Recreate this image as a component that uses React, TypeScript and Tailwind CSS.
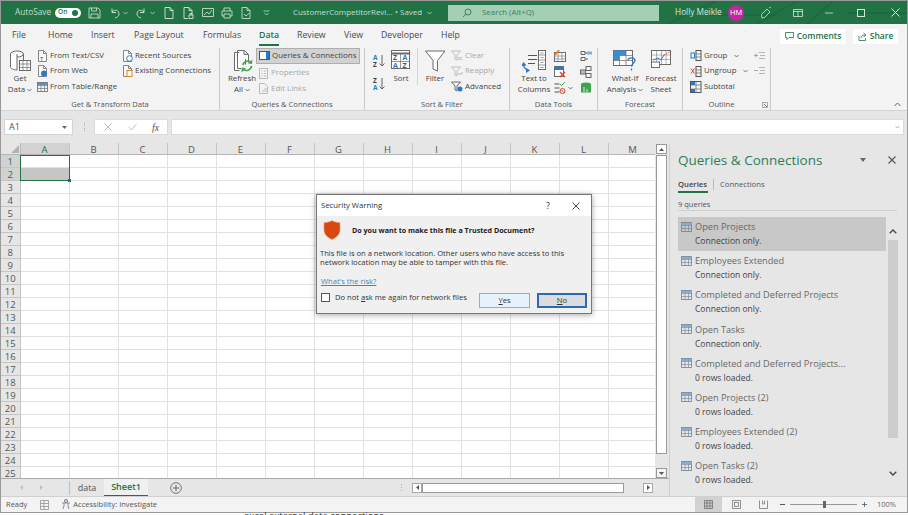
import React from "react";

const S = ({ w, h, className = "", children }: { w: number; h: number; className?: string; children: React.ReactNode }) => (
  <svg width={w} height={h} viewBox={`0 0 ${w} ${h}`} fill="none" className={`shrink-0 ${className}`}>{children}</svg>
);
const G = "#6b6b6b";
const Chev = ({ c = "#555" }: { c?: string }) => (
  <S w={5} h={4}><path d="M.5 1 2.5 3 4.5 1" stroke={c} strokeWidth=".8" /></S>
);
const Doc = ({ c = G, children }: { c?: string; children?: React.ReactNode }) => (
  <S w={11} h={12}><path d="M1.5.5h5l3 3v8h-8z M6.5.5v3h3" stroke={c} strokeWidth=".8" fill="#fafafa" />{children}</S>
);
const MiniTable = ({ c = "#666", head = "#5b8fc7" }: { c?: string; head?: string }) => (
  <S w={11} h={10}><rect x=".5" y=".5" width="10" height="9" stroke={c} strokeWidth=".8" /><path d="M.5 3.5h10M.5 6.5h10M4 .5v9M7.5 .5v9" stroke={c} strokeWidth=".6" /><path d="M.5 1h10v2H.5z" fill={head} /></S>
);

const SmallBtn = ({ icon, label, gray, className = "" }: { icon: React.ReactNode; label: string; gray?: boolean; className?: string }) => (
  <div className={`flex h-[15.5px] items-center gap-[2px] whitespace-nowrap ${gray ? "text-[#a8a8a8]" : "text-[#444]"} ${className}`}>
    {icon}<span>{label}</span>
  </div>
);
const Big = ({ icon, a, b, chev, w }: { icon: React.ReactNode; a: string; b?: string; chev?: boolean; w: string }) => (
  <div className={`flex flex-col items-center leading-[11px] text-[#444] ${w}`}>
    <div className="flex h-[25px] items-start justify-center pt-[2px]">{icon}</div>
    <span className="whitespace-nowrap">{a}</span>
    {b && <span className="flex items-center gap-[2px] whitespace-nowrap">{b}{chev && <Chev />}</span>}
  </div>
);
const Group = ({ label, w, pad, lab = "", children, extra }: { label: string; w: string; pad: string; lab?: string; children: React.ReactNode; extra?: React.ReactNode }) => (
  <div className={`relative mt-[1px] flex flex-col border-r border-[#c9c9c9] ${w}`}>
    <div className={`flex flex-1 items-start ${pad}`}>{children}</div>
    <div className={`h-[13px] whitespace-nowrap text-center text-[7.600px] leading-[15px] text-[#555] ${lab}`}>{label}</div>
    {extra}
  </div>
);

const QAT = () => (
  <div className="ml-[7px] flex items-center">
    <S w={13} h={12}><path d="M1 1h9l2 2v8H1z M3.5 1v3h5V1 M3 11V7h7v4" stroke="#c4dccd" strokeWidth=".9" /></S>
    <S w={11} h={12} className="ml-[8px]"><path d="M3 5c3-3 7-2 7 2 0 2-2 3.500-4 4M3 1.500v4h4" stroke="#c4dccd" strokeWidth="1" /></S>
    <S w={5} h={4} className="ml-[3px]"><path d="M.5 1 2.500 3 4.500 1" stroke="#c4dccd" strokeWidth=".8" /></S>
    <S w={11} h={12} className="ml-[8px]"><path d="M8 5C5 2 1 3 1 7c0 2 2 3.500 4 4M8 1.500v4H4" stroke="#c4dccd" strokeWidth="1" /></S>
    <S w={5} h={4} className="ml-[3px]"><path d="M.5 1 2.500 3 4.500 1" stroke="#c4dccd" strokeWidth=".8" /></S>
    <S w={10} h={12} className="ml-[9px]"><path d="M1 .5h5l3 3v8H1z M6 .5v3h3" stroke="#d5e6db" strokeWidth=".9" /></S>
    <S w={11} h={12} className="ml-[9px]"><path d="M1 .5h5l3 3v4 M1 .5v11h4 M6 .5v3h3 M6 8h4v3.500H6z M7 8V6.500h2V8" stroke="#d5e6db" strokeWidth=".9" /></S>
    <S w={12} h={11} className="ml-[8px]"><path d="M.5 1.500h11v8H.5z M2 8l3-3 2 2 3-4" stroke="#c4dccd" strokeWidth=".9" /></S>
    <S w={12} h={12} className="ml-[7px]"><path d="M3 4V1h6v3 M1 4h10v5H9 M3 9H1V4 M3 7h6v4H3z" stroke="#c4dccd" strokeWidth=".9" /></S>
    <S w={11} h={12} className="ml-[8px]"><path d="M1 .5h5l3 3v8H1z M6 .5v3h3 M3 7l2 2 3.500-3" stroke="#c4dccd" strokeWidth=".9" /></S>
    <S w={7} h={6} className="ml-[11px]"><path d="M.5 1h6M1.500 3l2 2 2-2" stroke="#c4dccd" strokeWidth=".8" /></S>
  </div>
);

const TitleBar = () => (
  <div className="relative flex h-[23px] items-center overflow-hidden bg-[#217346] text-[8.250px] text-[#c6dfd0]">
    <svg width="260" height="23" className="absolute right-0 top-0" fill="none"><path d="M20 23 70 0M110 23l40-23M160 23l26-23M200 12h60M60 14h70" stroke="#1e6a40" strokeWidth="2" /></svg>
    <span className="relative ml-[14px]">AutoSave</span>
    <div className="relative ml-[4px] flex h-[10px] w-[26px] items-center justify-between rounded-full bg-white px-[3px] text-[6.500px] font-semibold text-[#217346]">
      <span className="leading-none">On</span><span className="h-[6px] w-[6px] rounded-full bg-[#217346]" />
    </div>
    <QAT />
    <span className="relative ml-[23px] w-[102px] whitespace-nowrap text-[7.900px]">CustomerCompetitorRevi...</span>
    <span className="relative w-[27px] whitespace-nowrap text-[7.900px]">• Saved</span>
    <span className="relative ml-[5px]"><Chev c="#c6dfd0" /></span>
    <div className="relative ml-[16px] flex h-[16px] w-[211px] items-center bg-[#a3cfb6] text-[#3f8060]">
      <S w={10} h={10} className="ml-[14px]"><circle cx="6" cy="4" r="3" stroke="#3f8060" /><path d="M4 6 1 9" stroke="#3f8060" /></S>
      <span className="ml-[10px] text-[7.900px]">Search (Alt+Q)</span>
    </div>
    <span className="relative ml-[16px] w-[45px] whitespace-nowrap text-[#d7e8de]">Holly Meikle</span>
    <div className="relative ml-[8px] flex h-[16px] w-[16px] items-center justify-center rounded-full bg-[#c2269f] text-[7.500px] text-white">HM</div>
    <S w={12} h={12} className="relative ml-[16px]"><path d="M2 11 1.500 7.500 7 2l3 3-5.500 5.500z M9 1l2-1" stroke="#b9d6c5" strokeWidth=".9" /></S>
    <S w={10} h={8} className="relative ml-[21px]"><path d="M.5 .5h9v7h-9z M.5 2.500h9 M5 2.500v5" stroke="#d7e8de" strokeWidth=".8" /></S>
    <S w={8} h={2} className="relative ml-[22px]"><path d="M0 1h8" stroke="#a6cdb6" /></S>
    <S w={8} h={8} className="relative ml-[24px]"><rect x=".5" y=".5" width="7" height="7" stroke="#d7e8de" /></S>
    <S w={9} h={9} className="relative ml-[26px]"><path d="m.5 .5 8 8M8.500 .5l-8 8" stroke="#d7e8de" /></S>
  </div>
);

const TabsRow = () => (
  <div className="flex h-[23px] items-center bg-[#f3f3f3] pl-[11px] pr-[9px] pt-[1px] text-[8.750px] text-[#4a4a4a]">
    <span className="w-[36px]">File</span>
    <span className="w-[43px]">Home</span>
    <span className="w-[43px]">Insert</span>
    <span className="w-[69px] whitespace-nowrap">Page Layout</span>
    <span className="w-[56px]">Formulas</span>
    <span className="w-[38px]">
      <span className="relative inline-block font-semibold text-[#217346]">Data
        <span className="absolute -bottom-[3px] left-0 right-0 h-[2px] bg-[#217346]" />
      </span>
    </span>
    <span className="w-[47px]">Review</span>
    <span className="w-[37px]">View</span>
    <span className="w-[60px]">Developer</span>
    <span>Help</span>
    <div className="ml-auto flex gap-[7px] text-[8.500px] font-semibold text-[#217346]">
      <div className="flex h-[15px] w-[66px] items-center justify-center gap-[3px] bg-white">
        <S w={9} h={8}><path d="M.5 .5h8v5H4L2 7.500v-2H.5z" stroke="#217346" strokeWidth=".8" /></S>Comments
      </div>
      <div className="flex h-[15px] w-[45px] items-center justify-center gap-[3px] bg-white">
        <S w={9} h={9}><path d="M1 4v4.500h6.500V6 M3 6c0-2 1.500-3 4-3M5.500 1 8 3 5.500 5" stroke="#217346" strokeWidth=".8" /></S>Share
      </div>
    </div>
  </div>
);

const GetData = () => (
  <S w={22} h={23}>
    <ellipse cx="8" cy="4" rx="6.500" ry="3" stroke={G} fill="#fff" />
    <path d="M1.500 4v13c0 1.500 3 3 6.500 3V4" stroke={G} fill="#fff" />
    <path d="M14.500 4v6" stroke={G} />
    <rect x="10.500" y="10.500" width="11" height="10" fill="#fff" stroke={G} />
    <path d="M10.500 14h11M10.500 17.500h11M14 10.500v10M18 10.500v10" stroke={G} strokeWidth=".7" />
  </S>
);
const Refresh = () => (
  <S w={21} h={24}>
    <path d="M2.500 2.500h7l4 4v8 M2.500 2.500v18h5" stroke={G} fill="#fff" />
    <path d="M5.500 .5h7l4 4v8 M5.500 .5v18h4 M12 .5v4h4.500" stroke={G} fill="#fff" />
    <path d="M11 15a5 5 0 0 1 8.500-2.500M19.500 16a5 5 0 0 1-8.500 3" stroke="#3fa44c" strokeWidth="1.600" />
    <path d="m20.500 9.500-.500 4.500-4-.500zM9.500 22.500l.500-5 4 1z" fill="#3fa44c" />
  </S>
);
const Az = ({ flip }: { flip?: boolean }) => (
  <div className="flex h-[15px] items-center gap-[1px]">
    <div className="flex w-[5px] flex-col text-[6.500px] font-bold leading-[7px]">
      <span className={flip ? "text-[#444]" : "text-[#2b79c2]"}>{flip ? "Z" : "A"}</span>
      <span className={flip ? "text-[#2b79c2]" : "text-[#444]"}>{flip ? "A" : "Z"}</span>
    </div>
    <S w={6} h={12}><path d="M3 0v11M.5 8.500 3 11l2.500-2.500" stroke="#555" strokeWidth=".9" /></S>
  </div>
);
const SortIcon = () => (
  <S w={20} h={20}>
    <rect x=".5" y=".5" width="18" height="18" fill="#fff" stroke={G} />
    <path d="M.5 3.500h18" stroke={G} strokeWidth="2" /><path d="M9.500 4v15M.5 11.500h18" stroke={G} strokeWidth=".7" />
    <text x="2" y="10" fontSize="7" fill="#555" fontWeight="700">Z</text><text x="11.500" y="10" fontSize="7" fill="#2b79c2" fontWeight="700">A</text>
    <text x="2" y="17.500" fontSize="7" fill="#2b79c2" fontWeight="700">A</text><text x="11.500" y="17.500" fontSize="7" fill="#555" fontWeight="700">Z</text>
  </S>
);
const Funnel = () => (
  <S w={21} h={22}><path d="M.5 1h19.500l-7.500 9.500V21l-4.500-2v-8.500z" stroke={G} fill="#fff" /></S>
);
const TextCols = () => (
  <S w={25} h={24}>
    <path d="M6 5.500h9M6 9.500h9M6 13.500h7" stroke="#555" />
    <rect x="16.500" y=".5" width="7" height="19" stroke={G} fill="#fff" /><path d="M16.500 5h7M16.500 10h7M16.500 15h7M18.500 3h3M18.500 7.500h3M18.500 12.500h3M18.500 17.500h3" stroke={G} strokeWidth=".7" />
    <path d="M1.500 13a6 6 0 0 0 5 7" stroke="#2b79c2" strokeWidth="1.200" /><path d="M4 18v5l4-2.500zM-1 16l2.500-4 3 3.500z" fill="#2b79c2" />
    <path d="M4 20.500h3" stroke="#2b79c2" />
  </S>
);
const WhatIf = () => (
  <S w={24} h={21}>
    <rect x=".5" y=".5" width="19" height="15" fill="#fff" stroke={G} />
    <rect x=".5" y=".5" width="6" height="5" fill="#3d8bd4" /><rect x=".5" y="5.500" width="6" height="5" fill="#3d8bd4" /><rect x="6.500" y=".5" width="6.500" height="5" fill="#3d8bd4" />
    <path d="M.5 5.500h19M.5 10.500h19M6.500 .5v15M13 .5v15" stroke={G} strokeWidth=".7" />
    <path d="M15 10c.500-3 7-3 7 .500 0 2.500-3.500 2.500-3.500 6M18.500 18.500v2" stroke="#2b79c2" strokeWidth="1.300" />
  </S>
);
const ForecastI = () => (
  <S w={21} h={18}>
    <rect x=".5" y=".5" width="19" height="14" fill="#fff" stroke={G} /><path d="M.5 5h19M.5 9.500h19M5.500 .5v14M10.500 .5v14M15 .5v14" stroke={G} strokeWidth=".5" />
    <rect x=".5" y="12" width="8" height="5.500" fill="#fff" stroke={G} />
    <path d="M2 10 7 8l3 2 3-5" stroke="#3a78b5" /><path d="m13 5 3-1.500 3-2.500" stroke="#e4483b" strokeDasharray="1.500 .8" />
  </S>
);

const Ribbon = () => (
  <div className="flex h-[63px] bg-[#f3f3f3] text-[7.900px] leading-none">
    <Group label="Get &amp; Transform Data" w="w-[219px]" pad="pl-[6px]">
      <Big w="w-[26px]" a="Get" b="Data" chev icon={<GetData />} />
      <div className="ml-[4px] flex w-[85px] flex-col">
        <SmallBtn icon={<Doc><text x="3" y="10.500" fontSize="6" fill="#444">T</text></Doc>} label="From Text/CSV" />
        <SmallBtn icon={<Doc><circle cx="7" cy="8.500" r="3" fill="#2b79c2" /></Doc>} label="From Web" />
        <SmallBtn icon={<MiniTable />} label="From Table/Range" />
      </div>
      <div className="flex flex-col">
        <SmallBtn icon={<Doc><circle cx="7.500" cy="8.500" r="2.800" stroke="#2b79c2" fill="#fff" /></Doc>} label="Recent Sources" />
        <SmallBtn icon={<Doc><rect x="5" y="5.500" width="5" height="6" fill="#fff" stroke="#d9822b" /></Doc>} label="Existing Connections" />
      </div>
    </Group>
    <Group label="Queries &amp; Connections" w="w-[145px]" pad="pl-[10px]">
      <Big w="w-[24px]" a="Refresh" b="All" chev icon={<Refresh />} />
      <div className="ml-[2px] flex flex-col">
        <SmallBtn className="mb-[2px] w-[104px] border border-[#aeaeae] bg-[#d2d2d2] pl-[2px]" icon={
          <S w={11} h={9}><rect x=".5" y=".5" width="10" height="8" stroke="#555" fill="#fff" /><rect x="7" y="1" width="3" height="7" fill="#2b79c2" /></S>} label="Queries & Connections" />
        <SmallBtn gray className="pl-[3px]" icon={<S w={10} h={11}><rect x=".5" y=".5" width="8" height="10" stroke="#bbb" /><path d="M2.500 3h1M2.500 5.500h1M2.500 8h1M5 3h2M5 5.500h2M5 8h2" stroke="#bbb" /></S>} label="Properties" />
        <SmallBtn gray className="pl-[3px]" icon={<S w={10} h={11}><path d="M.5 .5h5l3 3v7h-8z" stroke="#bbb" /><path d="M3 8h5M5 6h4" stroke="#bbb" /></S>} label="Edit Links" />
      </div>
    </Group>
    <Group label="Sort &amp; Filter" w="w-[145px]" pad="pl-[8px]" lab="pl-[10px]">
      <div className="mt-[5px] flex flex-col gap-[8px]"><Az /><Az flip /></div>
      <div className="ml-[6px]"><Big w="w-[20px]" a="Sort" icon={<SortIcon />} /></div>
      <div className="ml-[6px] h-[37px] w-px bg-[#d4d4d4]" />
      <div className="ml-[6px]"><Big w="w-[22px]" a="Filter" icon={<Funnel />} /></div>
      <div className="ml-[5px] flex flex-col">
        <SmallBtn gray icon={<S w={12} h={11}><path d="M.5 1h9L6 5v5L4 9V5z" stroke="#bbb" /><path d="m7 7 4 3M11 7l-4 3" stroke="#bbb" /></S>} label="Clear" />
        <SmallBtn gray icon={<S w={12} h={11}><path d="M.5 1h9L6 5v5L4 9V5z" stroke="#bbb" /><path d="M7 8h4V6" stroke="#bbb" /></S>} label="Reapply" />
        <SmallBtn icon={<S w={12} h={11}><path d="M.5 1h9L6 5v5L4 9V5z" stroke={G} /><circle cx="9" cy="8" r="2.500" fill="#2b79c2" /></S>} label="Advanced" />
      </div>
    </Group>
    <Group label="Data Tools" w="w-[88px]" pad="pl-[6px]">
      <Big w="w-[36px]" a="Text to" b="Columns" icon={<TextCols />} />
      <div className="ml-[2px] flex flex-col gap-[4px] pt-[2px]">
        <S w={12} h={12}><rect x=".5" y="2.500" width="11" height="9" stroke={G} fill="#fff" /><path d="M.5 6h11M.5 9h11M4 2.500v9M8 2.500v9" stroke={G} strokeWidth=".6" /><path d="m1 5 4-5" stroke="#e8842c" strokeWidth="2" /></S>
        <S w={12} h={12}><rect x=".5" y=".5" width="9" height="10" stroke={G} fill="#fff" /><rect x=".5" y=".5" width="9" height="3.500" fill="#2b79c2" /><path d="m6 6 5 5M11 6l-5 5" stroke="#d8432f" strokeWidth="1.300" /></S>
        <div className="flex items-center gap-[2px]">
          <S w={12} h={12}><path d="M.5 2h5M.5 6h5M.5 10h5" stroke="#555" /><path d="m6 2 1.500 1.500L11 0" stroke="#3fa44c" /><circle cx="8.500" cy="9" r="2.500" stroke="#d8432f" /><path d="m7 7.500 3 3" stroke="#d8432f" /></S>
          <Chev />
        </div>
      </div>
      <div className="ml-[7px] flex flex-col gap-[4px] pt-[2px]">
        <S w={12} h={12}><path d="M1 1.500h4v3H1zM1 7.500h4v3H1zM5 3h7M5 9h3" stroke="#666" /><rect x="7" y="1.500" width="5" height="3" fill="#7eb1dd" /></S>
        <S w={12} h={12}><rect x="6" y=".5" width="5" height="4" stroke="#666" /><rect x=".5" y="4" width="5" height="4" fill="#bbb" stroke="#666" /><rect x="6" y="7.500" width="5" height="4" stroke="#666" /></S>
        <S w={12} h={12}><ellipse cx="6" cy="2.500" rx="5" ry="2" fill="#3fa44c" /><rect x="1" y="2.500" width="10" height="8" fill="#3fa44c" /><path d="M4 10V5M7 10V7" stroke="#d5ecd8" /></S>
      </div>
    </Group>
    <Group label="Forecast" w="w-[85px]" pad="pl-[7px]">
      <Big w="w-[40px]" a="What-If" b="Analysis" chev icon={<WhatIf />} />
      <Big w="w-[32px]" a="Forecast" b="Sheet" icon={<ForecastI />} />
    </Group>
    <Group label="Outline" w="w-[88px]" pad="pl-[7px]" lab="pr-[10px]" extra={
      <S w={6} h={6} className="absolute bottom-[2px] right-[2px]"><path d="M.5 .5h5v5h-5z" stroke="#777" strokeWidth=".6" /><path d="m2 2 3 3" stroke="#444" strokeWidth=".7" /></S>}>
      <div className="flex w-[44px] flex-col">
        <SmallBtn icon={<S w={12} h={11}><rect x="6" y=".5" width="5" height="10" stroke="#555" /><rect x="1" y="3" width="3.500" height="5" stroke="#2b79c2" /><path d="M6 4h5M6 7h5" stroke="#555" strokeWidth=".6" /></S>} label="Group" />
        <SmallBtn icon={<S w={12} h={11}><rect x="6" y=".5" width="5" height="10" stroke="#555" /><path d="m1 2.500 3.500 5M4.500 2.500 1 7.500" stroke="#d8432f" /><path d="M6 4h5M6 7h5" stroke="#555" strokeWidth=".6" /></S>} label="Ungroup" />
        <SmallBtn icon={<S w={12} h={12}><rect x=".5" y=".5" width="10.500" height="11" stroke="#555" /><path d="M6 .5v11M.5 4h10.500M.5 8h10.500" stroke="#555" strokeWidth=".6" /><rect x="1" y="1" width="4" height="3" fill="#2b79c2" /><rect x="1" y="8" width="4" height="3" fill="#2b79c2" /></S>} label="Subtotal" />
      </div>
      <div className="mt-[6px] flex flex-col gap-[11px]"><Chev /><div className="ml-[9px]"><Chev /></div></div>
      <div className="ml-auto mr-[5px] mt-[3px] flex flex-col gap-[6px]">
        <S w={11} h={9}><path d="M5 1.500h6M6 4.500h5M5 7.500h6" stroke="#999" strokeWidth=".7" /><path d="M0 4.500h4M2 2.500v4" stroke="#7aa98c" strokeWidth=".8" /></S>
        <S w={11} h={9}><path d="M5 1.500h6M6 4.500h5M5 7.500h6" stroke="#999" strokeWidth=".7" /><path d="M0 4.500h4" stroke="#999" strokeWidth=".8" /></S>
      </div>
    </Group>
    <div className="flex flex-1 items-end justify-end pb-[3px] pr-[6px]">
      <S w={7} h={5}><path d="m.5 4 3-3 3 3" stroke="#555" strokeWidth=".9" /></S>
    </div>
  </div>
);

const FormulaBar = () => (
  <div className="flex h-[28px] items-start bg-[#e6e6e6] pl-[3px] pr-[3px] pt-[4px] text-[9px] text-[#555]">
    <div className="flex h-[16px] w-[69px] items-center justify-between border border-[#d4d4d4] bg-white pl-[4px] pr-[5px]">
      A1
      <S w={5} h={3}><path d="M0 0h5L2.500 3z" fill="#666" /></S>
    </div>
    <div className="ml-[10px] flex h-[16px] w-[2px] flex-col items-center justify-center gap-[1.500px]">
      <i className="h-px w-px bg-[#aaa]" /><i className="h-px w-px bg-[#aaa]" /><i className="h-px w-px bg-[#aaa]" /><i className="h-px w-px bg-[#aaa]" />
    </div>
    <div className="ml-[9px] flex h-[16px] w-[74px] items-center border border-[#dcdcdc] bg-white pl-[9px]">
      <S w={8} h={8}><path d="m.5 .5 7 7M7.500 .5l-7 7" stroke="#bdbdbd" /></S>
      <S w={9} h={8} className="ml-[16px]"><path d="m.5 4 3 3 5-6" stroke="#bdbdbd" /></S>
      <span className="ml-[15px] font-['Liberation_Serif'] text-[10px] italic text-[#555]">fx</span>
    </div>
    <div className="ml-[3px] flex h-[16px] flex-1 items-center justify-end border border-[#dcdcdc] bg-white pr-[3px]"><Chev c="#999" /></div>
  </div>
);

const cols = ["A", "B", "C", "D", "E", "F", "G", "H", "I", "J", "K", "L", "M"];
const rows = Array.from({ length: 25 }, (_, i) => i + 1);

const Sheet = () => (
  <div className="relative min-w-0 flex-1 overflow-hidden bg-white">
    <div className="flex h-[12px] border-b border-[#b5b5b5] bg-[#e6e6e6] text-[9.500px] text-[#555]">
      <div className="relative w-[19.500px] shrink-0 border-r border-[#bbb]">
        <S w={8} h={8} className="absolute bottom-[1px] right-[1px]"><path d="M8 0v8H0z" fill="#b4b4b4" /></S>
      </div>
      {cols.map((c, i) => (
        <div key={c} className={`flex h-[11px] w-[49px] shrink-0 items-center justify-center border-r border-[#c4c4c4] pt-[1px] leading-[11px] ${i === 0 ? "bg-[#d2d2d2] text-[#217346]" : ""}`}>{c}</div>
      ))}
    </div>
    {rows.map((r) => (
      <div key={r} className="flex h-[13px]">
        <div className={`flex w-[19.500px] shrink-0 items-center justify-center border-b border-r border-[#c4c4c4] pt-[1px] text-[9.500px] leading-[11px] ${r <= 2 ? "bg-[#d2d2d2] text-[#217346]" : "bg-[#e6e6e6] text-[#555]"}`}>{r}</div>
        {cols.map((c, i) => (
          <div key={c} className={`w-[49px] shrink-0 border-b border-r border-[#e1e1e1] ${i === 0 && r === 2 ? "bg-[#c6c6c6]" : ""}`} />
        ))}
      </div>
    ))}
    <div className="absolute left-[19px] top-[12px] h-[26px] w-[50px] border border-[#217346]">
      <span className="absolute -bottom-[2px] -right-[2px] h-[3px] w-[3px] bg-[#217346]" />
    </div>
  </div>
);

const VScroll = () => (
  <div className="flex w-[14px] shrink-0 flex-col bg-[#e6e6e6] pl-[1px] pr-[2px] pt-[1px]">
    <div className="flex h-[10px] items-center justify-center border border-[#999] bg-white"><S w={5} h={3}><path d="M2.500 0 5 3H0z" fill="#555" /></S></div>
    <div className="mt-px h-[299px] border border-[#999] bg-white" />
    <div className="mt-auto flex h-[10px] items-center justify-center border border-[#999] bg-[#f5f5f5]"><S w={5} h={3}><path d="M0 0h5L2.500 3z" fill="#555" /></S></div>
  </div>
);

const items: [string, string][] = [
  ["Open Projects", "Connection only."],
  ["Employees Extended", "Connection only."],
  ["Completed and Deferred Projects", "Connection only."],
  ["Open Tasks", "Connection only."],
  ["Completed and Deferred Projects...", "0 rows loaded."],
  ["Open Projects (2)", "0 rows loaded."],
  ["Employees Extended (2)", "0 rows loaded."],
  ["Open Tasks (2)", "0 rows loaded."],
];

const Panel = () => (
  <div className="flex w-[238px] shrink-0 flex-col overflow-hidden border-l border-[#d0d0d0] bg-[#e6e6e6] pl-[8px]">
    <div className="flex h-[33px] items-center pt-[1px]">
      <span className="w-[145px] whitespace-nowrap text-[13.500px] text-[#2f7d56]">Queries &amp; Connections</span>
      <S w={6} h={4} className="ml-[37px]"><path d="M0 0h6L3 4z" fill="#666" /></S>
      <S w={8} h={8} className="ml-[22px]"><path d="m.5 .5 7 7M7.500 .5l-7 7" stroke="#555" strokeWidth="1.100" /></S>
    </div>
    <div className="flex h-[17px] items-center text-[7.700px] text-[#555]">
      <span className="relative pr-[3px] font-semibold text-[#444]">Queries
        <span className="absolute -bottom-[3px] left-0 right-[2px] h-[2px] bg-[#217346]" />
      </span>
      <span className="mx-[3px] h-[11px] w-px bg-[#bbb]" />
      <span className="ml-[3px]">Connections</span>
    </div>
    <div className="mr-[10px] flex h-[18px] items-end border-b border-[#cfcfcf] text-[7.500px] text-[#555]">9 queries</div>
    <div className="mt-[6px] flex flex-1">
      <div className="w-[208px] shrink-0">
        {items.map(([a, b], i) => (
          <div key={i} className={`flex h-[34.200px] flex-col pl-[3px] pt-[3px] ${i === 0 ? "bg-[#c8c8c8]" : ""}`}>
            <div className="flex items-center gap-[3px] whitespace-nowrap text-[9.200px] leading-[13px] text-[#666]">
              <MiniTable c="#6d8093" head="#8aaccf" /><span>{a}</span>
            </div>
            <span className="mt-[2px] pl-[14px] text-[8.500px] leading-[12px] text-[#444]">{b}</span>
          </div>
        ))}
      </div>
      <div className="ml-[2px] flex w-[10px] flex-col items-center">
        <div className="flex h-[23px] items-center pt-[5px]"><S w={8} h={5}><path d="m.7 4.300 3.300-3.300 3.300 3.300" stroke="#444" strokeWidth="1.300" /></S></div>
        <div className="h-[198px] w-full bg-[#cdcdcd]" />
        <div className="mt-[30px] flex h-[10px] items-center"><S w={8} h={5}><path d="m.7 .7 3.300 3.300 3.300-3.300" stroke="#444" strokeWidth="1.300" /></S></div>
      </div>
    </div>
  </div>
);

const SheetTabs = () => (
  <div className="flex h-[18px] shrink-0 items-center border-t border-[#aaa] bg-[#e6e6e6] text-[9px] text-[#555]">
    <S w={3} h={5} className="ml-[19px]"><path d="M3 0v5L0 2.500z" fill="#c0c0c0" /></S>
    <S w={3} h={5} className="ml-[17px]"><path d="M0 0v5l3-2.500z" fill="#c0c0c0" /></S>
    <div className="ml-[26px] h-[14px] w-px bg-[#c0c0c0]" />
    <span className="w-[34px] text-center">data</span>
    <span className="flex h-full w-[44px] items-center justify-center border-b border-[#217346] bg-[#f0f0f0] font-semibold text-[#217346]">Sheet1</span>
    <S w={12} h={12} className="ml-[22px]"><circle cx="6" cy="6" r="5.300" stroke="#777" /><path d="M3 6h6M6 3v6" stroke="#666" /></S>
    <div className="ml-[219px] flex h-[7px] w-px flex-col justify-between"><i className="h-px w-px bg-[#aaa]" /><i className="h-px w-px bg-[#aaa]" /><i className="h-px w-px bg-[#aaa]" /></div>
    <div className="ml-[10px] flex h-[10px] w-[10px] items-center justify-center border border-[#aaa] bg-white"><S w={3} h={5}><path d="M3 0v5L0 2.500z" fill="#555" /></S></div>
    <div className="h-[10px] w-[202px] border border-[#999] bg-white" />
    <div className="h-[10px] w-[19px]" />
    <div className="flex h-[10px] w-[10px] items-center justify-center border border-[#aaa] bg-white"><S w={3} h={5}><path d="M0 0v5l3-2.500z" fill="#555" /></S></div>
  </div>
);

const StatusBar = () => (
  <div className="flex h-[16px] shrink-0 items-center border-t border-[#d0d0d0] bg-[#f3f3f3] text-[7.500px] text-[#555]">
    <span className="ml-[5px]">Ready</span>
    <S w={10} h={10} className="ml-[13px]"><path d="M.5 .5h8v9h-8z M.5 3.500h8M.5 6.500h8M4 .5v9" stroke="#888" strokeWidth=".7" /></S>
    <S w={10} h={11} className="ml-[11px]"><circle cx="5" cy="2" r="1.500" stroke="#777" /><path d="M1 4h8M3 4v3l-1 3M7 4v3l1 3" stroke="#777" strokeWidth=".8" /></S>
    <span className="ml-[2px]">Accessibility: Investigate</span>
    <div className="ml-auto flex h-full w-[27px] items-center justify-center bg-[#d2d2d2]">
      <S w={9} h={9}><path d="M.5 .5h8v8h-8z M3 .5v8M6 .5v8M.5 3h8M.5 6h8" stroke="#555" strokeWidth=".6" /></S>
    </div>
    <S w={9} h={9} className="ml-[10px]"><path d="M.5 .5h8v8h-8z" stroke="#666" strokeWidth=".7" /><rect x="2.500" y="2.500" width="4" height="4" stroke="#666" strokeWidth=".7" /></S>
    <S w={9} h={9} className="ml-[18px]"><path d="M.5 .5v8h8v-8 M3.500 .5v3.500h2v-3.500" stroke="#666" strokeWidth=".7" /></S>
    <span className="ml-[12px] h-px w-[5px] bg-[#555]" />
    <div className="relative ml-[5px] h-px w-[67px] bg-[#999]"><span className="absolute left-[33px] top-[-3px] h-[7px] w-[3px] bg-[#666]" /></div>
    <S w={5} h={5} className="ml-[5px]"><path d="M0 2.500h5M2.500 0v5" stroke="#555" strokeWidth=".8" /></S>
    <span className="ml-[10px] mr-[11px] text-[#666]">100%</span>
  </div>
);

const Dialog = () => (
  <div className="absolute left-[316px] top-[194px] flex h-[120px] w-[276px] flex-col border border-[#777] bg-[#f0f0f0] text-[7.600px] text-[#333] shadow-[0_1px_6px_rgba(0,0,0,0.35)]">
    <div className="flex h-[21px] items-center justify-between bg-white pl-[4px] pr-[11px] text-[7.750px]">
      <span>Security Warning</span>
      <div className="flex items-center gap-[22px]">
        <span className="text-[9px]">?</span>
        <S w={8} h={8}><path d="m.5 .5 7 7M7.500 .5l-7 7" stroke="#444" /></S>
      </div>
    </div>
    <div className="flex h-[25px] items-center pl-[6px] pt-[3px]">
      <S w={18} h={20}>
        <path d="M9 .5c2 1.500 5 2 8 2.200V10c0 4.500-3.500 7.500-8 9.500C4.500 17.500 1 14.500 1 10V2.700c3-.2 6-.7 8-2.200z" fill="#d9480f" stroke="#f0a080" strokeWidth=".6" />
      </S>
      <span className="ml-[11px] whitespace-nowrap text-[7.150px] font-bold text-[#222]">Do you want to make this file a Trusted Document?</span>
    </div>
    <p className="mt-[8px] pl-[3px] pr-[5px] leading-[9px]">This file is on a network location. Other users who have access to this network location may be able to tamper with this file.</p>
    <a className="ml-[4px] mt-[9px] w-fit leading-[10px] text-[#4f81b0] underline">What's the risk?</a>
    <div className="mt-[4px] flex items-start pl-[4px]">
      <span className="mt-[3px] h-[9px] w-[9px] border border-[#555] bg-white" />
      <span className="ml-[5px] mt-[2px] whitespace-nowrap">Do not <u>a</u>sk me again for network files</span>
      <span className="ml-auto mt-[3px] flex h-[15px] w-[51px] items-center justify-center border border-[#7fb4de] bg-[#e5f1fb]"><u>Y</u>es</span>
      <span className="ml-[7px] mr-[4px] mt-[3px] flex h-[15px] w-[50px] items-center justify-center border-2 border-[#2b6cb0] bg-[#dcdcdc]"><u>N</u>o</span>
    </div>
  </div>
);

export default function App() {
  return (
    <div className="relative h-[515px] w-[908px] overflow-hidden bg-white font-['Open_Sans',sans-serif]">
      <div className="flex h-[513px] flex-col border border-[#9a9a9a]">
        <TitleBar />
        <TabsRow />
        <Ribbon />
        <div className="h-[5px] border-t border-[#d4d4d4] bg-[#e6e6e6]" />
        <FormulaBar />
        <div className="flex min-h-0 flex-1">
          <div className="flex min-w-0 flex-1 flex-col bg-[#e6e6e6]">
            <div className="flex min-h-0 flex-1 overflow-hidden">
              <Sheet />
              <VScroll />
            </div>
            <SheetTabs />
          </div>
          <Panel />
        </div>
        <StatusBar />
      </div>
      <div className="-mt-[3px] pl-[244px] text-[9.500px] leading-[12px] text-[#333]">excel external data connections</div>
      <Dialog />
    </div>
  );
}
